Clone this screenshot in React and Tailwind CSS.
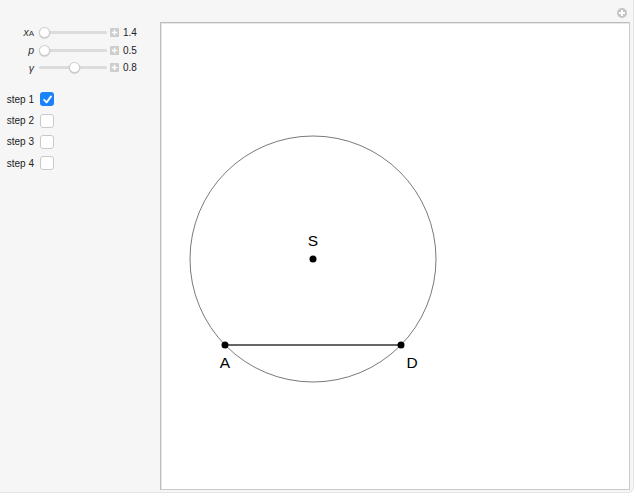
import React from 'react';

const sliders = [
  { label: 'x', sub: 'A', pos: 0, value: '1.4' },
  { label: 'p', pos: 0, value: '0.5' },
  { label: 'γ', pos: 0.53, value: '0.8' },
];

const steps = [
  { label: 'step 1', checked: true },
  { label: 'step 2', checked: false },
  { label: 'step 3', checked: false },
  { label: 'step 4', checked: false },
];

const PlusBox = () => (
  <svg width="9" height="9" viewBox="0 0 9 9" className="shrink-0">
    <rect x="0" y="0" width="9" height="9" rx="1" fill="#cdcdcd" />
    <path d="M4.5 1.8 V7.2 M1.8 4.5 H7.2" stroke="#fff" strokeWidth="1.4" />
  </svg>
);

const Slider = ({ label, sub, pos, value }) => (
  <div className="flex items-center h-[17.5px]">
    <div className="w-[35px] text-right pr-[1px] text-[10.5px] italic text-[#333] leading-none">
      {label}
      {sub && <span className="not-italic text-[8px]">{sub}</span>}
    </div>
    <div className="relative w-[68px] h-[12px] ml-[4px] flex items-center">
      <div className="w-full h-[3px] rounded-full bg-[#dcdcdc]" />
      <div
        className="absolute top-[0.5px] w-[11px] h-[11px] rounded-full bg-white border border-[#cfcfcf] shadow-[0_0.5px_1px_rgba(0,0,0,0.25)]"
        style={{ left: `${pos * 57}px` }}
      />
    </div>
    <div className="ml-[3px]">
      <PlusBox />
    </div>
    <span className="ml-[4px] text-[10px] text-[#222]">{value}</span>
  </div>
);

const Step = ({ label, checked }) => (
  <div className="flex items-center h-[21.4px]">
    <span className="w-[34px] text-right text-[10px] text-[#222]">{label}</span>
    <div
      className={`ml-[6px] w-[14px] h-[14px] rounded-[3px] flex items-center justify-center ${
        checked ? 'bg-[#1a82fb]' : 'bg-white border border-[#c9c9c9]'
      }`}
    >
      {checked && (
        <svg width="11" height="11" viewBox="0 0 12 12">
          <path d="M2.3 6.4 L5 9.2 L9.8 2.6" fill="none" stroke="white" strokeWidth="2" strokeLinecap="round" strokeLinejoin="round" />
        </svg>
      )}
    </div>
  </div>
);

export default function App() {
  return (
    <div className="w-[637px] h-[496px] bg-white" style={{ fontFamily: '"Liberation Sans", Arial, sans-serif' }}>
      <div className="relative w-[634px] h-[493px] bg-[#f6f6f6] border-r border-b border-[#e4e4e4] rounded-br-[6px] flex">
        <div className="w-[160px] shrink-0 pt-[24px]">
          {sliders.map((s) => (
            <Slider key={s.value} {...s} />
          ))}
          <div className="mt-[12px]">
            {steps.map((s) => (
              <Step key={s.label} {...s} />
            ))}
          </div>
        </div>
        <div className="mt-[22px] w-[470px] h-[468px] bg-white border border-[#cbcbcb] border-t-[#bdbdbd] border-l-[#bdbdbd] shadow-[inset_1px_1px_0_#e6e6e6]">
          <svg width="468" height="466" viewBox="161 23 468 466" style={{ fontFamily: '"Liberation Sans", Arial, sans-serif' }}>
            <circle cx="313" cy="259" r="123" fill="none" stroke="#7a7a7a" strokeWidth="1" />
            <line x1="225" y1="345" x2="401" y2="345" stroke="#333" strokeWidth="1.3" />
            <circle cx="313" cy="259" r="3.5" fill="#000" />
            <circle cx="225" cy="345" r="3.5" fill="#000" />
            <circle cx="401" cy="345" r="3.5" fill="#000" />
            <text x="313" y="246" textAnchor="middle" fontSize="15.5" fill="#000">S</text>
            <text x="225" y="368" textAnchor="middle" fontSize="15.5" fill="#000">A</text>
            <text x="412" y="368" textAnchor="middle" fontSize="15.5" fill="#000">D</text>
          </svg>
        </div>
        <div className="absolute top-[8px] right-[6px] w-[10px] h-[10px] rounded-full bg-[#c4c4c4] flex items-center justify-center">
          <div className="absolute w-[6px] h-[1.5px] bg-white" />
          <div className="absolute w-[1.5px] h-[6px] bg-white" />
        </div>
      </div>
    </div>
  );
}
